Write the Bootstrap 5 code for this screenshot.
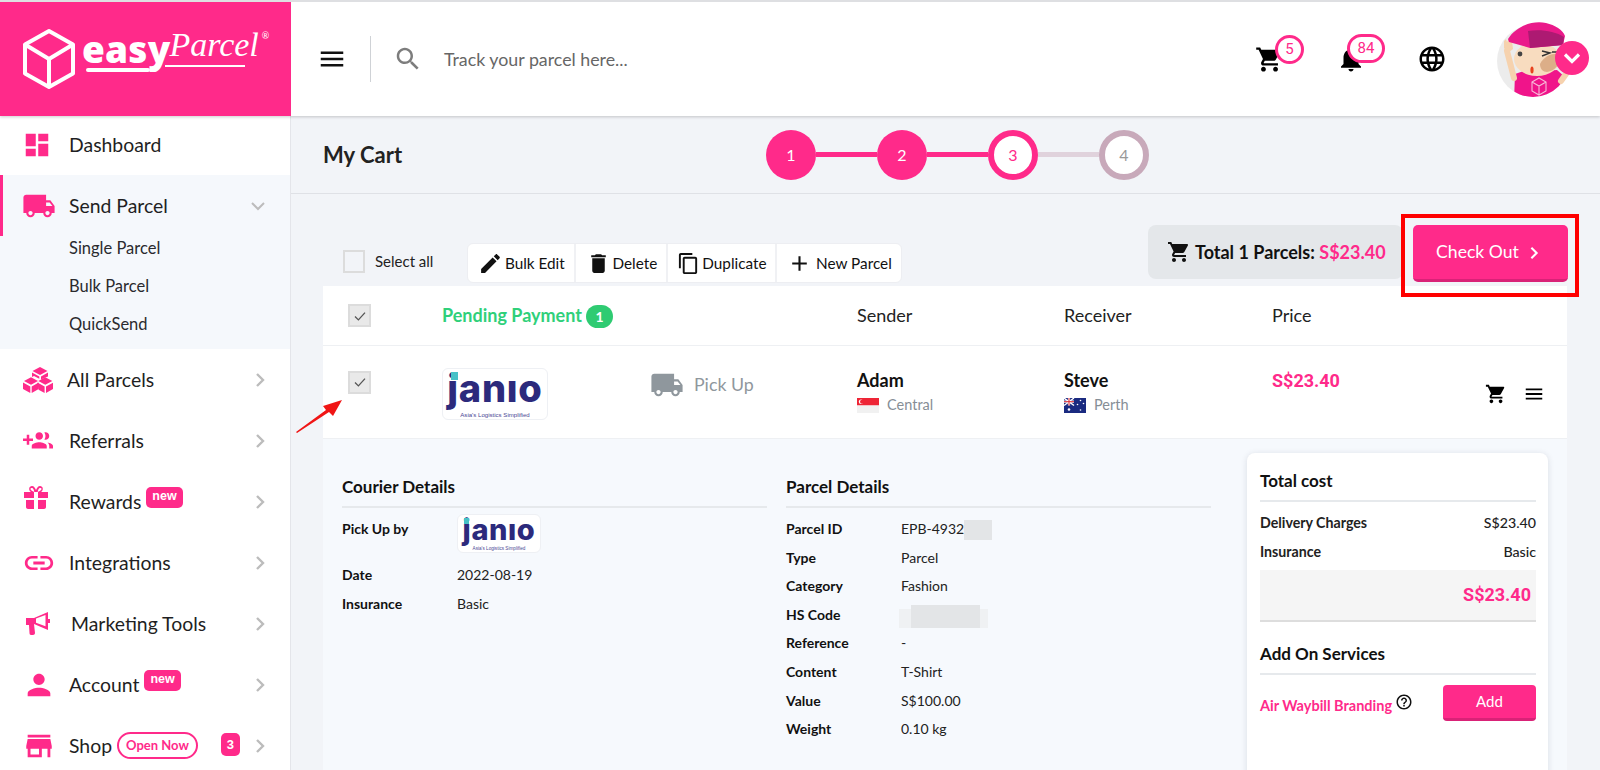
<!doctype html>
<html lang="en">
<head>
<meta charset="utf-8">
<title>My Cart</title>
<link rel="stylesheet" href="https://cdn.jsdelivr.net/npm/bootstrap@5.3.0/dist/css/bootstrap.min.css">
<style>
html,body{height:770px;overflow:hidden}
body{font-family:Lato,"Liberation Sans",sans-serif;background:#f2f4f8;color:#1b1b1f;border-top:2px solid #dedfe2}
svg{display:block;flex:none;fill:currentColor}
.ep-pink{color:#ff2a8a}
.ep-top{height:114px;background:#fff;box-shadow:0 1px 3px rgba(0,0,0,.2);position:relative;z-index:3}
.ep-logo{width:291px;flex:none;background:#ff2a8a;color:#fff;padding:26px 0 0 22px;position:relative}
.ep-easy{font:800 37px/1 "Open Sans",sans-serif;letter-spacing:.2px;margin:2px 0 0 6px;position:relative}
.ep-easy::after{content:"";position:absolute;left:4px;right:20px;bottom:-5px;height:4px;background:#fff;border-radius:2px}
.ep-script{font:italic 400 34px/1 "Liberation Serif",serif;margin:0 0 0 -1px;position:relative}
.ep-script::after{content:"";position:absolute;left:-4px;right:14px;bottom:-5px;height:2px;background:#fff}
.ep-reg{font-size:9px;line-height:1;margin:3px 0 0 3px}
.ep-burger{margin-left:26px;color:#111}
.ep-vsep{width:1px;height:46px;background:#cfd2d6;margin:0 22px 0 23px}
.ep-search{color:#7d7d7d;margin-right:21px}
.ep-track{font-size:17.8px;color:#666}
.ep-tool{position:relative;color:#000}
.ep-toolcart{margin-right:52px;margin-left:3px}
.ep-toolbell{margin-right:51px}
.ep-pill{position:absolute;display:flex;align-items:center;justify-content:center;background:#fff;border:3px solid #ff2a8a;border-radius:15px;color:#ff2a8a;font:400 15px/1 Roboto,sans-serif;height:29px}
.ep-p5{left:20px;top:-10px;width:29px}
.ep-p84{left:11px;top:-10px;width:38px}
.ep-avatar{width:80px;height:80px;position:relative;margin:0 24px 0 49px}
.ep-drop{position:absolute;left:59px;top:22px;width:34px;height:34px;border-radius:50%;background:#ff2a8a;color:#fff;display:flex;align-items:center;justify-content:center}
.ep-side{width:291px;height:654px;background:#fff;border-right:1px solid #e4e5ea;flex:none;z-index:2}
.ep-item{height:61px;padding:0 24px 0 26px;font-size:19.4px;line-height:1;color:#1f1f23}
.ep-ico{color:#ff2a8a;width:43px;flex:none;overflow:visible}
.ep-cubes{width:41px}
.ep-mega{width:45px}
.ep-chev{margin-left:auto;color:#bcbcbc}
.ep-dash{height:60px;padding-bottom:2px}
.ep-open{background:#f5f8fc;height:174px;margin-top:-1px;position:relative}
.ep-open::before{content:"";position:absolute;left:0;top:0;width:3px;height:61px;background:#ff2a8a}
.ep-subs{margin-top:-7px}
.ep-sub{font-size:16.5px;height:38px;padding-left:69px;display:flex;align-items:center;color:#2a2a2e}
.ep-new{background:#ff2a8a;color:#fff;font:700 12.5px/1 "Liberation Sans",sans-serif;border-radius:5px;padding:3px 6px 6px;margin:-8px 0 0 5px}
.ep-open-now{border:2px solid #ff2a8a;color:#ff2a8a;border-radius:14px;font-size:13px;font-weight:700;padding:3px 7px;margin-left:5px;line-height:1.25}
.ep-count{background:#ff2a8a;color:#fff;border-radius:5px;font:700 13px/1 "Liberation Sans",sans-serif;width:19px;height:23px;display:flex;align-items:center;justify-content:center;margin:-3px 0 0 23px}
.ep-main{flex:1;min-width:0;position:relative}
.ep-head{height:78px;border-bottom:1px solid #dfe1e6;padding-left:32px}
.ep-title{width:443px;font-size:22px;font-weight:700;color:#222;margin:2px 0 0}
.ep-step{width:50px;height:50px;border-radius:50%;background:#ff2a8a;color:#fff;font-size:16px;flex:none;display:flex;align-items:center;justify-content:center}
.ep-step-cur{background:#fff;border:6px solid #ff2a8a;color:#ff2a8a}
.ep-step-off{background:#fff;border:6px solid #c8a9ba;color:#999}
.ep-link{width:61px;height:5px;background:#ff2a8a}
.ep-link-off{background:#e0d2dc}
.ep-bar{height:92px;padding:0 33px 0 52px;position:relative}
.ep-selwrap{margin-top:56px}
.ep-box{width:22px;height:23px;border:2px solid #dcdcdc;background:#f2f4f8;flex:none}
.ep-box-on{width:23px;background:#e9e9e9;color:#555;display:flex;align-items:center;justify-content:center}
.ep-selall{font-size:15px;margin-left:10px;margin-right:34px;color:#222}
.ep-tools{margin:49px 0 0;height:40px;background:#fff;border:1px solid #edeef2;border-radius:6px}
.ep-tools>div{height:100%;font-size:15.3px;color:#111;border-right:2px solid #f0f1f4;gap:2px;justify-content:center}
.ep-tools>div:nth-child(1){width:108px}
.ep-tools>div:nth-child(2){width:92px}
.ep-tools>div:nth-child(3){width:109px}
.ep-tools>div:nth-child(4){width:124px;border:0;gap:4px}
.ep-total{position:absolute;right:197px;top:31px;width:255px;height:54px;background:#e4e7ea;border-radius:8px;font-size:18px;font-weight:700;padding-left:19px;color:#111}
.ep-checkout{position:absolute;right:32px;top:31px;width:155px;height:57px;background:#ff2a8a;color:#fff;border:0;border-bottom:3px solid #d92277;border-radius:5px;font-size:17.6px;padding:1px 5px 0 0}
.ep-checkout:hover{background:#ff2a8a;color:#fff}
.ep-checkout svg{margin-left:9px}
.ep-redbox{position:absolute;right:21px;top:20px;width:178px;height:83px;border:4px solid #f00;pointer-events:none;z-index:2}
.ep-table{margin:0 33px 0 32px;background:#fff}
.ep-grid{display:grid;grid-template-columns:119px 208px 207px 207px 208px 1fr;align-items:center}
.ep-r1{height:60px;border-bottom:1px solid #eef0f3;font-size:18px;color:#222}
.ep-r2{height:93px;border-bottom:1px solid #eef0f3}
.ep-cellchk{padding-left:25px}
.ep-rowchk{margin-top:-20px}
.ep-green{color:#2fd07a;font-weight:700;grid-column:span 2}
.ep-gbadge{background:#2fcb72;color:#fff;border-radius:12px;width:27px;height:23px;font-size:14px;font-weight:700;margin-left:4px;display:inline-flex;align-items:center;justify-content:center}
.ep-jan{position:relative;background:#fff;border:1px solid #eef0f4;border-radius:6px;color:#2c2a7c;font-family:Inter,"Open Sans",sans-serif;text-align:center}
.ep-jan-big{width:106px;height:52px;font-size:38px;margin-top:3px}
.ep-jan-small{width:84px;height:39px;font-size:29px;margin-top:-4px}
.ep-jan b{display:block;letter-spacing:.02em;font-weight:800;line-height:1;white-space:nowrap;height:1em}
.ep-jan i{position:absolute;left:.22em;top:.1em;width:.17em;height:.2em;background:#47c1c7}
.ep-jan small{position:absolute;left:0;right:0;bottom:0;font:400 .16em/1 "Liberation Sans",sans-serif;color:#4a4794;white-space:nowrap}
.ep-pick{color:#8f979d;font-size:17.8px;gap:10px;margin-top:-15px}
.ep-name{font-size:18px;font-weight:700;color:#111;line-height:1;margin-bottom:9px}
.ep-loc{font-size:14.5px;color:#868e96;gap:8px;line-height:1}
.ep-pricecell{align-self:start}
.ep-price{font:700 18px/1 Roboto,sans-serif;color:#ff2a8a;margin-top:26px;width:150px}
.ep-acts{justify-content:flex-end;gap:16px;padding-right:22px;margin-top:37px;color:#000}
.ep-panel{background:#f6f9fd;height:340px;padding:14px 19px 0;gap:19px}
.ep-col{width:425px;padding-top:23px;font-size:14px;color:#222}
.ep-h{font-size:17px;font-weight:700;color:#111;padding-bottom:9px;border-bottom:2px solid #e6e9ec;line-height:21px;margin-bottom:10px}
.ep-kv{min-height:28.6px;display:flex;align-items:flex-start;line-height:22px}
.ep-kv>span:first-child{width:115px;font-weight:700;color:#111;flex:none}
.ep-kv-logo{min-height:46px}
.ep-card{width:301px;margin-left:17px;background:#fff;border-radius:8px;box-shadow:0 1px 6px rgba(40,50,70,.14);padding:17px 12px 0 13px;height:340px;font-size:14.2px;color:#222;border:0}
.ep-sum{line-height:22px;height:28.6px;font-weight:500}
.ep-sum b{font-weight:700;color:#222}
.ep-totbox{height:52px;background:#f5f5f5;border-bottom:2px solid #ddd;font:700 18px/1 Roboto,sans-serif;color:#ff2a8a;padding-right:5px;margin:1px 0 21px}
.ep-add{width:93px;height:36px;background:#ff2a8a;color:#fff;border:0;border-bottom:3px solid #d92277;border-radius:4px;font-size:15px;padding:0}
.ep-add:hover{background:#ff2a8a;color:#fff}
.ep-awb{color:#ff2a8a;font-weight:700;margin-top:10px;font-size:14.5px}
.ep-help{margin:-2px 0 0 3px;color:#111}
.ep-blur{position:absolute;background:#e3e5e7}
.ep-blur-soft{position:absolute;background:#eff1f3}
.ep-b1{left:641px;top:81px;width:28px;height:20px}
.ep-b2{left:576px;top:170px;width:89px;height:19px}
.ep-b3{left:588px;top:166px;width:69px;height:23px}
.ep-arrow{position:absolute;left:5px;top:282px;color:#f01515;z-index:2}
.ep-up4{margin-top:-9px}
</style>
</head>
<body>
<svg width="0" height="0" style="position:absolute">
<symbol id="i-cart" viewBox="0 0 24 24"><path d="M7 18c-1.1 0-1.99.9-1.99 2S5.9 22 7 22s2-.9 2-2-.9-2-2-2zM1 2v2h2l3.6 7.59-1.35 2.45c-.16.28-.25.61-.25.96 0 1.1.9 2 2 2h12v-2H7.42c-.14 0-.25-.11-.25-.25l.03-.12.9-1.63h7.45c.75 0 1.41-.41 1.75-1.03l3.58-6.49c.08-.14.12-.31.12-.48 0-.55-.45-1-1-1H5.21l-.94-2H1zm16 16c-1.1 0-1.99.9-1.99 2s.89 2 1.99 2 2-.9 2-2-.9-2-2-2z"/></symbol>
<symbol id="i-menu" viewBox="0 0 24 24"><path d="M3 18h18v-2H3v2zm0-5h18v-2H3v2zm0-7v2h18V6H3z"/></symbol>
<symbol id="i-truck" viewBox="0 0 24 24"><path d="M20 8h-3V4H3c-1.1 0-2 .9-2 2v11h2c0 1.66 1.34 3 3 3s3-1.34 3-3h6c0 1.66 1.34 3 3 3s3-1.34 3-3h2v-5l-3-4zM6 18.5c-.83 0-1.5-.67-1.5-1.5s.67-1.5 1.5-1.5 1.5.67 1.5 1.5-.67 1.5-1.5 1.5zm13.5-9l1.96 2.5H17V9.5h2.5zm-1.5 9c-.83 0-1.5-.67-1.5-1.5s.67-1.5 1.5-1.5 1.5.67 1.5 1.5-.67 1.5-1.5 1.5z"/></symbol>
<symbol id="i-right" viewBox="0 0 12 16"><path d="M3 2l6 6-6 6" fill="none" stroke="currentColor" stroke-width="2.4"/></symbol>
<symbol id="i-check" viewBox="0 0 16 16"><path d="M3 8.5l3.4 3.4L13 4.6" fill="none" stroke="currentColor" stroke-width="1.3"/></symbol>
</svg>

<header class="ep-top d-flex align-items-center">
  <div class="ep-logo h-100 d-flex align-items-start">
    <svg width="54" height="62" viewBox="0 0 54 62" fill="none"><g fill="none" stroke="#fff" stroke-width="4" stroke-linejoin="round"><path d="M27 3l24 13.5v29L27 59 3 45.5v-29z"/><path d="M3 16.5L27 31l24-14.500M27 31v28"/></g></svg>
    <div class="ep-easy">easy</div>
    <div class="ep-script">Parcel</div>
    <div class="ep-reg">®</div>
  </div>
  <svg class="ep-burger" width="30" height="30"><use href="#i-menu"/></svg>
  <div class="ep-vsep"></div>
  <svg class="ep-search" width="30" height="30" viewBox="0 0 24 24"><path d="M15.5 14h-.79l-.28-.27C15.41 12.59 16 11.11 16 9.5 16 5.91 13.09 3 9.5 3S3 5.91 3 9.5 5.91 16 9.5 16c1.61 0 3.09-.59 4.23-1.57l.27.28v.79l5 4.99L20.49 19l-4.99-5zm-6 0C7.01 14 5 11.99 5 9.5S7.01 5 9.5 5 14 7.01 14 9.5 11.99 14 9.5 14z"/></svg>
  <div class="ep-track">Track your parcel here...</div>
  <div class="ms-auto d-flex align-items-center">
    <div class="ep-tool ep-toolcart"><svg width="29" height="29"><use href="#i-cart"/></svg><span class="ep-pill ep-p5">5</span></div>
    <div class="ep-tool ep-toolbell"><svg width="30" height="30" viewBox="0 0 24 24"><path d="M12 22c1.1 0 2-.9 2-2h-4c0 1.1.89 2 2 2zm6-6v-5c0-3.07-1.64-5.64-4.5-6.32V4c0-.83-.67-1.5-1.5-1.5s-1.5.67-1.5 1.5v.68C7.63 5.36 6 7.92 6 11v5l-2 2v1h16v-1l-2-2z"/></svg><span class="ep-pill ep-p84">84</span></div>
    <div class="ep-tool"><svg width="30" height="30" viewBox="0 0 24 24"><path d="M11.99 2C6.47 2 2 6.48 2 12s4.47 10 9.99 10C17.52 22 22 17.52 22 12S17.52 2 11.99 2zm6.93 6h-2.95c-.32-1.25-.78-2.45-1.38-3.56 1.84.63 3.37 1.91 4.33 3.56zM12 4.04c.83 1.2 1.48 2.53 1.91 3.96h-3.82c.43-1.43 1.08-2.76 1.91-3.96zM4.26 14C4.1 13.36 4 12.69 4 12s.1-1.36.26-2h3.38c-.08.66-.14 1.32-.14 2 0 .68.06 1.34.14 2H4.26zm.82 2h2.95c.32 1.25.78 2.45 1.38 3.56-1.84-.63-3.37-1.9-4.33-3.56zm2.95-8H5.08c.96-1.66 2.49-2.93 4.33-3.56C8.81 5.55 8.35 6.75 8.03 8zM12 19.96c-.83-1.2-1.48-2.53-1.91-3.96h3.82c-.43 1.43-1.08 2.76-1.91 3.96zM14.34 14H9.66c-.09-.66-.16-1.32-.16-2 0-.68.07-1.35.16-2h4.68c.09.65.16 1.32.16 2 0 .68-.07 1.34-.16 2zm.25 5.56c.6-1.11 1.06-2.31 1.38-3.56h2.95c-.96 1.65-2.49 2.93-4.33 3.56zM16.36 14c.08-.66.14-1.32.14-2 0-.68-.06-1.34-.14-2h3.38c.16.64.26 1.31.26 2s-.1 1.36-.26 2h-3.38z"/></svg></div>
    <div class="ep-avatar">
      <svg width="80" height="80" viewBox="0 0 80 80" fill="none">
        <defs><clipPath id="avb"><circle cx="37" cy="42" r="36"/><rect x="0" y="0" width="80" height="42"/></clipPath></defs>
        <circle cx="37" cy="42" r="36" fill="#ececec"/>
        <g clip-path="url(#avb)">
          <path d="M19 55l12-4 14 1 16-1 8 7 1 24H18z" fill="#f0148a"/>
          <path d="M36 63l7-4 7 4v9l-7 4-7-4zM36 63l7 4 7-4M43 67v9" fill="none" stroke="#f7b9d8" stroke-width="1.1"/>
        </g>
        <path d="M18 59L11 32" stroke="#f6d2ae" stroke-width="6" stroke-linecap="round"/>
        <path d="M8 22l2-2 1 3 2-3 1 3 2-1 1 8-5 4-4-5z" fill="#f6d2ae"/>
        <path d="M65 62l5-7" stroke="#f6d2ae" stroke-width="6" stroke-linecap="round"/>
        <ellipse cx="41" cy="40" rx="23" ry="17" fill="#f8dcbf"/>
        <path d="M44 45c4-8 12-11 20-10 1 10-5 17-13 18-4 0-7-3-7-8z" fill="#dcae88"/>
        <path d="M12 20C20 7 37 1 50 4c9 2 17 7 19 13l-2 9-33 3-21-6z" fill="#ea1a8a"/>
        <path d="M32 12c12-2 27 0 36 6l-1 8-33 3z" fill="#ad1a72"/>
        <circle cx="24" cy="35" r="2.4" fill="#444"/>
        <path d="M46 32l8 2-8 3M56 33h7" stroke="#333" stroke-width="1.4" fill="none"/>
        <ellipse cx="36" cy="51" rx="1.6" ry="3.6" fill="#e8421d"/>
      </svg>
      <div class="ep-drop"><svg width="18" height="12" viewBox="0 0 18 12"><path d="M2 2.5l7 7 7-7" fill="none" stroke="#fff" stroke-width="3.2"/></svg></div>
    </div>
  </div>
</header>

<div class="d-flex">
  <nav class="ep-side">
    <div class="ep-item ep-dash d-flex align-items-center"><svg class="ep-ico" width="43" height="24" viewBox="0 0 43 24"><svg x="-4" y="-3" width="30" height="30" viewBox="0 0 24 24"><path d="M3 13h8V3H3v10zm0 8h8v-6H3v6zm10 0h8V11h-8v10zm0-18v6h8V3h-8z"/></svg></svg>Dashboard</div>
    <div class="ep-open">
      <div class="ep-item d-flex align-items-center ep-pink"><svg class="ep-ico" width="43" height="30" viewBox="0 0 43 30"><svg x="-4" y="-2" width="34" height="34" viewBox="0 0 24 24"><use href="#i-truck"/></svg></svg>Send Parcel<svg class="ep-chev" width="16" height="12" viewBox="0 0 16 12"><path d="M2 3l6 6 6-6" fill="none" stroke="currentColor" stroke-width="2"/></svg></div>
      <div class="ep-subs">
        <div class="ep-sub">Single Parcel</div>
        <div class="ep-sub">Bulk Parcel</div>
        <div class="ep-sub">QuickSend</div>
      </div>
    </div>
    <div class="ep-item d-flex align-items-center"><svg class="ep-ico ep-cubes" width="41" height="26" viewBox="3 0 41 26"><path d="M14 0l7.500 4-7.500 4-7.500-4z" transform="translate(3 0)"/><path d="M1 14l7-3.700 7 3.700-7 3.700z"/><path d="M0 15.500l7.300 3.900V26L0 22zM8.700 19.400l7-3.800V22l-7 4z"/><path d="M15.300 14l7-3.700 7 3.700-7 3.700z"/><path d="M14.300 15.600l7.300 3.900V26l-6-3.300zM23 19.500l7-3.800V22l-7 4z"/><path d="M9 5.500l7.300 3.900v2.300L11 9l-2 1zM18 9.400l7-3.900v4l-2 .8-5 2.300z"/></svg>All Parcels<svg class="ep-chev" width="12" height="16"><use href="#i-right"/></svg></div>
    <div class="ep-item d-flex align-items-center"><svg class="ep-ico" width="43" height="30" viewBox="0 0 43 30"><svg x="-3" y="0" width="30" height="30" viewBox="0 0 24 24"><path d="M8 10H5V7H3v3H0v2h3v3h2v-3h3v-2zm10 1c1.660 0 2.990-1.340 2.990-3S19.660 5 18 5c-.32 0-.63.05-.91.14.57.81.9 1.790.9 2.860s-.34 2.040-.9 2.860c.28.090.59.140.91.140zm-5 0c1.660 0 2.990-1.340 2.990-3S14.660 5 13 5s-3 1.340-3 3 1.340 3 3 3zm6.620 2.160c.83.730 1.380 1.660 1.380 2.840v2h3v-2c0-1.540-2.370-2.490-4.380-2.840zM13 13c-2 0-6 1-6 3v2h12v-2c0-2-4-3-6-3z"/></svg></svg>Referrals<svg class="ep-chev" width="12" height="16"><use href="#i-right"/></svg></div>
    <div class="ep-item d-flex align-items-center"><svg class="ep-ico ep-up4" width="43" height="24" viewBox="3 0 43 24"><path d="M9 1c-3 0-4 4-1 6H1v6h10V7h4v6h10V7h-7c3-2 2-6-1-6-2 0-3 2-4 4-1-2-2-4-4-4zm0 2c1.200 0 2 2 2.300 4C9 6 7.500 5 7.500 4 7.500 3.300 8 3 9 3zm8 0c1 0 1.500.3 1.500 1 0 1-1.500 2-3.800 3C15 5 15.800 3 17 3zM3 15h8v9H5c-1 0-2-1-2-2zm12 0h8v7c0 1-1 2-2 2h-6z"/></svg>Rewards<span class="ep-new">new</span><svg class="ep-chev" width="12" height="16"><use href="#i-right"/></svg></div>
    <div class="ep-item d-flex align-items-center"><svg class="ep-ico" width="43" height="30" viewBox="0 0 43 30"><svg x="-4" y="-2" width="34" height="34" viewBox="0 0 24 24"><path d="M3.900 12c0-1.710 1.390-3.100 3.100-3.100h4V7H7c-2.760 0-5 2.240-5 5s2.240 5 5 5h4v-1.900H7c-1.710 0-3.100-1.390-3.100-3.100zM8 13h8v-2H8v2zm9-6h-4v1.900h4c1.710 0 3.100 1.390 3.100 3.100s-1.390 3.100-3.100 3.100h-4V17h4c2.760 0 5-2.240 5-5s-2.240-5-5-5z"/></svg></svg>Integrations<svg class="ep-chev" width="12" height="16"><use href="#i-right"/></svg></div>
    <div class="ep-item d-flex align-items-center"><svg class="ep-ico ep-mega" width="45" height="24" viewBox="0 0 45 24"><path d="M0 6h8l14-6v18L8 12l1 9c0 1-1 2-2 2H5c-1 0-1.500-1-1.500-2L3 13H0zM10 6.500v4.200l9.500 3.500V3z" fill-rule="evenodd"/><path d="M22 7h2v4h-2z"/></svg>Marketing Tools<svg class="ep-chev" width="12" height="16"><use href="#i-right"/></svg></div>
    <div class="ep-item d-flex align-items-center"><svg class="ep-ico" width="43" height="28" viewBox="0 0 43 28"><svg x="-4" y="-3" width="34" height="34" viewBox="0 0 24 24"><path d="M12 12c2.210 0 4-1.790 4-4s-1.790-4-4-4-4 1.790-4 4 1.790 4 4 4zm0 2c-2.670 0-8 1.340-8 4v2h16v-2c0-2.660-5.330-4-8-4z"/></svg></svg>Account<span class="ep-new">new</span><svg class="ep-chev" width="12" height="16"><use href="#i-right"/></svg></div>
    <div class="ep-item d-flex align-items-center"><svg class="ep-ico" width="43" height="28" viewBox="0 0 43 28"><svg x="-4" y="-3" width="34" height="34" viewBox="0 0 24 24"><path d="M20 4H4v2h16V4zm1 10v-2l-1-5H4l-1 5v2h1v6h10v-6h4v6h2v-6h1zm-9 4H6v-4h6v4z"/></svg></svg>Shop<span class="ep-open-now">Open Now</span><span class="ep-count">3</span><svg class="ep-chev" width="12" height="16"><use href="#i-right"/></svg></div>
  </nav>

  <main class="ep-main">
    <div class="ep-head d-flex align-items-center">
      <h1 class="ep-title">My Cart</h1>
      <div class="d-flex align-items-center">
        <div class="ep-step">1</div><div class="ep-link"></div>
        <div class="ep-step">2</div><div class="ep-link"></div>
        <div class="ep-step ep-step-cur">3</div><div class="ep-link ep-link-off"></div>
        <div class="ep-step ep-step-off">4</div>
      </div>
    </div>
    <div class="ep-bar d-flex align-items-start">
      <div class="d-flex align-items-center ep-selwrap">
        <div class="ep-box"></div><div class="ep-selall">Select all</div>
      </div>
      <div class="ep-tools d-flex">
        <div class="d-flex align-items-center"><svg width="25" height="25" viewBox="0 0 24 24"><path d="M3 17.250V21h3.750L17.810 9.940l-3.750-3.750L3 17.250zM20.710 7.040c.39-.39.39-1.020 0-1.410l-2.340-2.340c-.39-.39-1.020-.39-1.410 0l-1.830 1.830 3.750 3.750 1.830-1.830z"/></svg>Bulk Edit</div>
        <div class="d-flex align-items-center"><svg width="25" height="25" viewBox="0 0 24 24"><path d="M6 19c0 1.100.9 2 2 2h8c1.100 0 2-.9 2-2V7H6v12zM19 4h-3.500l-1-1h-5l-1 1H5v2h14V4z"/></svg>Delete</div>
        <div class="d-flex align-items-center"><svg width="23" height="23" viewBox="0 0 24 24"><path d="M16 1H4c-1.100 0-2 .9-2 2v14h2V3h12V1zm3 4H8c-1.100 0-2 .9-2 2v14c0 1.100.9 2 2 2h11c1.100 0 2-.9 2-2V7c0-1.100-.9-2-2-2zm0 16H8V7h11v14z"/></svg>Duplicate</div>
        <div class="d-flex align-items-center"><svg width="25" height="25" viewBox="0 0 24 24"><path d="M19 13h-6v6h-2v-6H5v-2h6V5h2v6h6v2z"/></svg>New Parcel</div>
      </div>
      <div class="ep-total d-flex align-items-center"><svg width="24" height="24" class="me-1"><use href="#i-cart"/></svg>Total 1 Parcels:&nbsp;<span class="ep-pink">S$23.40</span></div>
      <button class="btn ep-checkout d-flex align-items-center justify-content-center">Check Out<svg width="12" height="14"><use href="#i-right"/></svg></button>
      <div class="ep-redbox"></div>
    </div>

    <div class="ep-table">
      <div class="ep-grid ep-r1">
        <div class="ep-cellchk"><div class="ep-box ep-box-on"><svg width="16" height="16"><use href="#i-check"/></svg></div></div>
        <div class="ep-green">Pending Payment<span class="ep-gbadge">1</span></div>
        <div>Sender</div><div>Receiver</div><div>Price</div>
      </div>
      <div class="ep-grid ep-r2">
        <div class="ep-cellchk ep-rowchk"><div class="ep-box ep-box-on"><svg width="16" height="16"><use href="#i-check"/></svg></div></div>
        <div><div class="ep-jan ep-jan-big"><b>janıo</b><i></i><small>Asia's Logistics Simplified</small></div></div>
        <div class="ep-pick d-flex align-items-center"><svg width="34" height="34" viewBox="0 0 24 24"><use href="#i-truck"/></svg>Pick Up</div>
        <div>
          <div class="ep-name">Adam</div>
          <div class="ep-loc d-flex align-items-center"><svg width="22" height="15" viewBox="0 0 22 15"><rect width="22" height="7.500" fill="#ee2536"/><rect y="7.500" width="22" height="7.500" fill="#f1f1f1"/><circle cx="4" cy="3.700" r="2.200" fill="#fff"/><circle cx="5" cy="3.700" r="2" fill="#ee2536"/></svg>Central</div>
        </div>
        <div>
          <div class="ep-name">Steve</div>
          <div class="ep-loc d-flex align-items-center"><svg width="22" height="15" viewBox="0 0 22 15"><rect width="22" height="15" fill="#1a2a80"/><path d="M0 0l10 7.500M10 0L0 7.500" stroke="#fff" stroke-width="1.400"/><path d="M5 0v7.500M0 3.700h10" stroke="#fff" stroke-width="2.200"/><path d="M5 0v7.500M0 3.700h10" stroke="#d8242f" stroke-width="1"/><g fill="#fff"><circle cx="5" cy="11.500" r="1.300"/><circle cx="16.500" cy="2.500" r=".8"/><circle cx="16.500" cy="12" r=".8"/><circle cx="13.500" cy="6.500" r=".8"/><circle cx="19.500" cy="5.500" r=".8"/></g></svg>Perth</div>
        </div>
        <div class="d-flex ep-pricecell">
          <div class="ep-price">S$23.40</div>
          <div class="ep-acts d-flex align-items-center flex-grow-1"><svg width="22" height="22"><use href="#i-cart"/></svg><svg width="22" height="22"><use href="#i-menu"/></svg></div>
        </div>
      </div>
      <div class="ep-panel d-flex position-relative">
        <section class="ep-col">
          <div class="ep-h">Courier Details</div>
          <div class="ep-kv ep-kv-logo"><span>Pick Up by</span><div class="ep-jan ep-jan-small"><b>janıo</b><i></i><small>Asia's Logistics Simplified</small></div></div>
          <div class="ep-kv"><span>Date</span><span>2022-08-19</span></div>
          <div class="ep-kv"><span>Insurance</span><span>Basic</span></div>
        </section>
        <section class="ep-col">
          <div class="ep-h">Parcel Details</div>
          <div class="ep-kv"><span>Parcel ID</span><span>EPB-4932</span></div>
          <div class="ep-kv"><span>Type</span><span>Parcel</span></div>
          <div class="ep-kv"><span>Category</span><span>Fashion</span></div>
          <div class="ep-kv"><span>HS Code</span><span></span></div>
          <div class="ep-kv"><span>Reference</span><span>-</span></div>
          <div class="ep-kv"><span>Content</span><span>T-Shirt</span></div>
          <div class="ep-kv"><span>Value</span><span>S$100.00</span></div>
          <div class="ep-kv"><span>Weight</span><span>0.10 kg</span></div>
        </section>
        <div class="ep-blur ep-b1"></div>
        <div class="ep-blur-soft ep-b2"></div>
        <div class="ep-blur ep-b3"></div>
        <aside class="card ep-card">
          <div class="ep-h">Total cost</div>
          <div class="ep-sum d-flex justify-content-between"><b>Delivery Charges</b><span>S$23.40</span></div>
          <div class="ep-sum d-flex justify-content-between"><b>Insurance</b><span>Basic</span></div>
          <div class="ep-totbox d-flex align-items-center justify-content-end">S$23.40</div>
          <div class="ep-h">Add On Services</div>
          <div class="d-flex justify-content-between">
            <div class="d-flex ep-awb align-items-start">Air Waybill Branding<svg class="ep-help" width="18" height="18" viewBox="0 0 24 24"><path d="M11 18h2v-2h-2v2zm1-16C6.480 2 2 6.480 2 12s4.480 10 10 10 10-4.480 10-10S17.520 2 12 2zm0 18c-4.410 0-8-3.590-8-8s3.590-8 8-8 8 3.590 8 8-3.590 8-8 8zm0-14c-2.210 0-4 1.790-4 4h2c0-1.100.9-2 2-2s2 .9 2 2c0 2-3 1.750-3 5h2c0-2.250 3-2.500 3-5 0-2.210-1.790-4-4-4z"/></svg></div>
            <button class="btn ep-add">Add</button>
          </div>
        </aside>
      </div>
    </div>
    <svg class="ep-arrow" width="50" height="36" viewBox="0 0 50 36"><path d="M0 34L30 12l-3-4 19-6-9 16-4-4L1 35z"/></svg>
  </main>
</div>
<script src="https://cdn.jsdelivr.net/npm/bootstrap@5.3.0/dist/js/bootstrap.bundle.min.js"></script>
</body>
</html>
